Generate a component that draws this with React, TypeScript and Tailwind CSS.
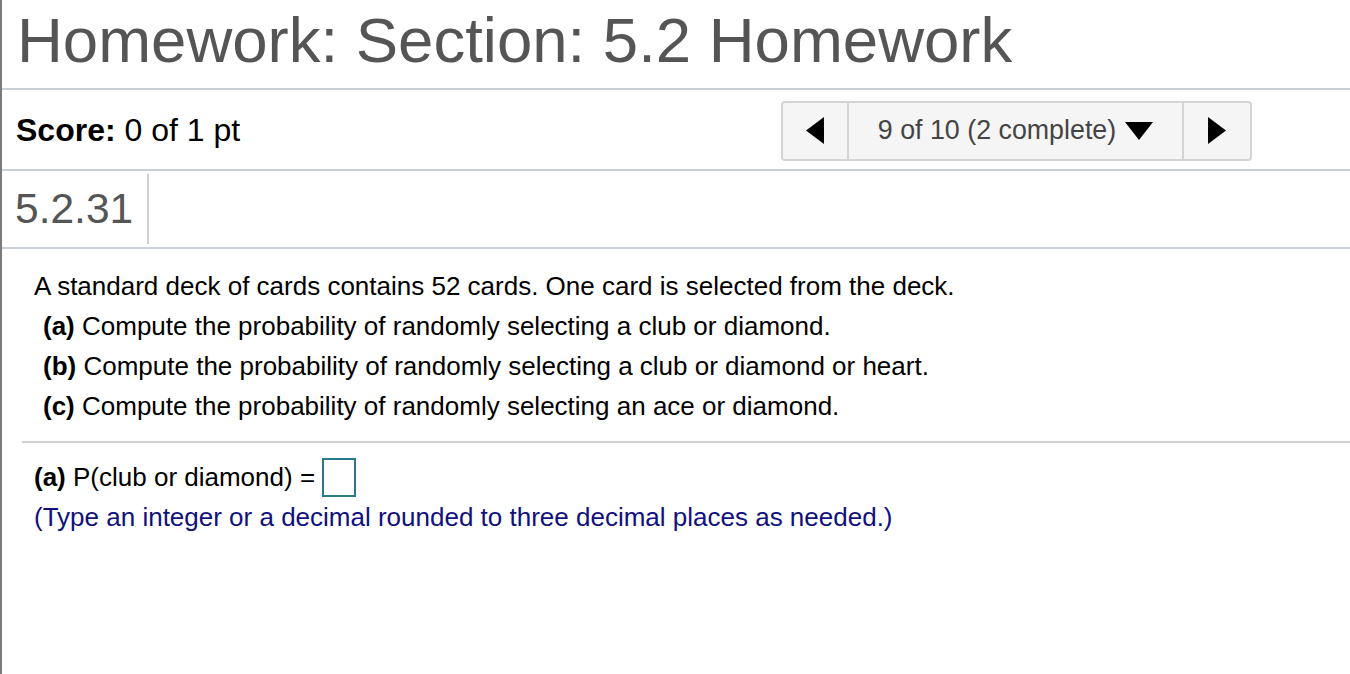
export default function App() {
  const parts = [
    { label: '(a)', text: 'Compute the probability of randomly selecting a club or diamond.' },
    { label: '(b)', text: 'Compute the probability of randomly selecting a club or diamond or heart.' },
    { label: '(c)', text: 'Compute the probability of randomly selecting an ace or diamond.' },
  ]

  return (
    <div className="h-[674px] w-[1350px] overflow-hidden bg-white border-l-2 border-[#7a7a7a] font-['Liberation_Sans',Arial,sans-serif] text-black">
      {/* Title */}
      <div className="h-[90px] pl-[15px] border-b-2 border-[#c9cfd6] flex items-center">
        <h1 className="text-[63.5px] leading-none text-[#555555] -mt-[6px]">Homework: Section: 5.2 Homework</h1>
      </div>

      {/* Score + navigator */}
      <div className="h-[81px] pl-[14px] border-b-2 border-[#c9cfd6] flex items-center">
        <div className="w-[765px] text-[32px] leading-none">
          <span className="font-bold">Score:</span> 0 of 1 pt
        </div>
        <div className="mt-[2px] h-[60px] flex rounded-[4px] border-2 border-[#d4d4d4] bg-[#f5f5f5]">
          <button className="w-[66px] flex items-center justify-center border-r-2 border-[#d4d4d4]">
            <svg width="18" height="27" viewBox="0 0 18 27">
              <polygon points="18,0 18,27 0,13.5" fill="#000" />
            </svg>
          </button>
          <button className="w-[335px] flex items-center justify-center gap-[9px] border-r-2 border-[#d4d4d4]">
            <span className="text-[26.8px] text-[#444444]">9 of 10 (2 complete)</span>
            <svg width="28" height="18" viewBox="0 0 28 18">
              <polygon points="0,0 28,0 14,18" fill="#000" />
            </svg>
          </button>
          <button className="w-[66px] flex items-center justify-center">
            <svg width="18" height="27" viewBox="0 0 18 27">
              <polygon points="0,0 18,13.5 0,27" fill="#000" />
            </svg>
          </button>
        </div>
      </div>

      {/* Question number */}
      <div className="h-[78px] border-b-2 border-[#c9cfd6] flex items-stretch">
        <div className="w-[147px] pl-[13px] flex items-center my-[3px] border-r-2 border-[#d0d0d0]">
          <span className="text-[42.5px] leading-none text-[#555555]">5.2.31</span>
        </div>
      </div>

      {/* Question body */}
      <div className="pl-[20px]">
        <div className="pl-[12px] pt-[17px] pb-[15px] text-[26px] leading-[40px]">
          <p>A standard deck of cards contains 52 cards. One card is selected from the deck.</p>
          {parts.map((p) => (
            <p key={p.label} className="pl-[9px]">
              <span className="font-bold">{p.label}</span> {p.text}
            </p>
          ))}
        </div>
        <div className="border-t-2 border-[#d0d0d0] pl-[12px] pt-[14px] text-[26px] leading-[40px]">
          <p className="flex items-center">
            <span className="font-bold">(a)</span>&nbsp;P(club or diamond)&nbsp;=&nbsp;
            <span className="inline-block w-[34px] h-[39px] border-2 border-[#2a7a8c]" />
          </p>
          <p className="text-[#10107e]">(Type an integer or a decimal rounded to three decimal places as needed.)</p>
        </div>
      </div>
    </div>
  )
}
